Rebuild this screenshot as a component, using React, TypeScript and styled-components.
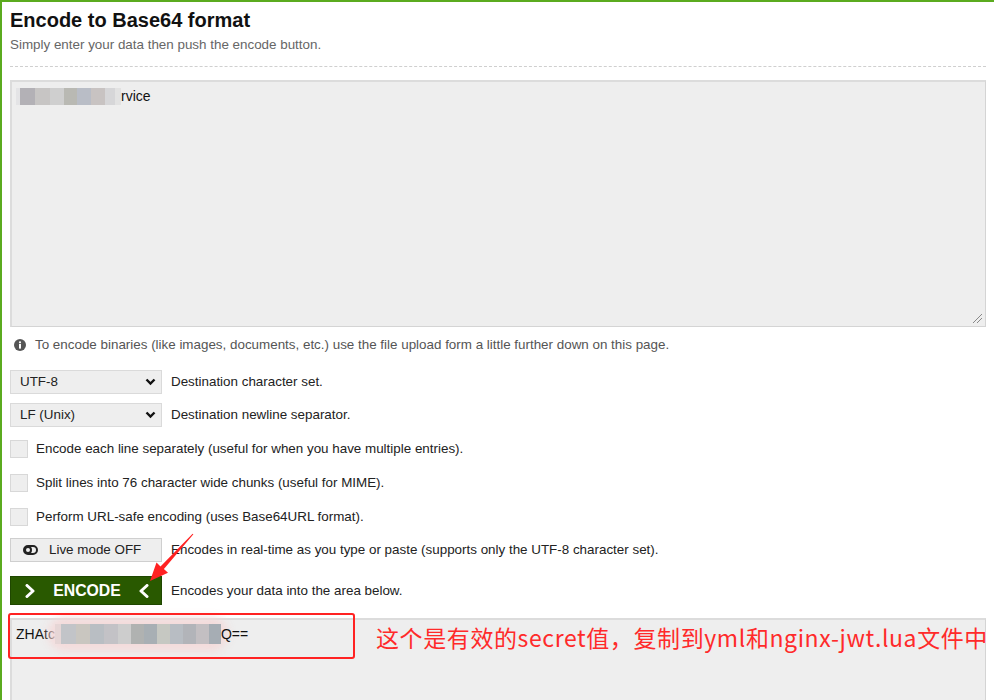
import React from "react";
import styled, { createGlobalStyle } from "styled-components";

const GlobalStyle = createGlobalStyle`
  html, body { margin: 0; padding: 0; background: #fff; }
  body { font-family: "Liberation Sans", Arial, sans-serif; color: #222; }
  * { box-sizing: border-box; }
`;

const Page = styled.div`
  position: relative;
  width: 994px;
  height: 700px;
  overflow: hidden;
  border-top: 2px solid #5bab1f;
  border-left: 2px solid #5bab1f;
  padding: 6px 8px 0 8px;
`;

const Title = styled.h1`
  margin: 0;
  font-size: 20px;
  line-height: 24px;
  font-weight: bold;
  color: #111;
`;

const Subtitle = styled.p`
  margin: 5px 0 0 0;
  font-size: 13.4px;
  line-height: 16px;
  color: #666;
`;

const Divider = styled.div`
  margin-top: 13px;
  border-top: 1px dashed #cfcfcf;
`;

const Area = styled.div<{ $h: number; $mt: number }>`
  position: relative;
  margin-top: ${(p) => p.$mt}px;
  height: ${(p) => p.$h}px;
  background: #eeeeee;
  border: 1px solid #d4d4d4;
  border-top: 2px solid #dcdcdc;
  border-left: 2px solid #dcdcdc;
  padding: 6px 4px;
  font-size: 14px;
  line-height: 17px;
  color: #111;
  display: flex;
  align-items: flex-start;
`;

const Mosaic = styled.span`
  display: inline-flex;
  height: 17px;
  align-items: stretch;
`;

const Tile = styled.span<{ $c: string; $w: number }>`
  width: ${(p) => p.$w}px;
  background: ${(p) => p.$c};
`;

const PinkMosaic = styled.span`
  display: inline-flex;
  height: 20px;
  margin-top: -2px;
  align-items: stretch;
  border-radius: 12px;
  box-shadow: 0 0 8px 7px rgba(245, 215, 215, 0.85);
  background: rgba(240, 205, 205, 0.9);
`;

const Grip = styled.svg`
  position: absolute;
  right: 2px;
  bottom: 2px;
`;

const InfoLine = styled.div`
  margin-top: 10px;
  display: flex;
  align-items: center;
  gap: 9px;
  padding-left: 4px;
  font-size: 13.4px;
  line-height: 16px;
  color: #555;
`;

const Row = styled.div<{ $mt: number }>`
  margin-top: ${(p) => p.$mt}px;
  display: flex;
  align-items: center;
  font-size: 13.4px;
  line-height: 16px;
  color: #222;
`;

const Select = styled.div`
  width: 152px;
  height: 24px;
  background: #eeeeee;
  border: 1px solid #dadada;
  display: flex;
  align-items: center;
  justify-content: space-between;
  padding: 0 5px 0 9px;
  font-size: 13.4px;
  color: #222;
  margin-right: 9px;
`;

const Check = styled.span`
  width: 18px;
  height: 18px;
  background: #eeeeee;
  border: 1px solid #d8d8d8;
  margin-right: 8px;
`;

const LiveButton = styled.div`
  width: 152px;
  height: 24px;
  background: #eeeeee;
  border: 1px solid #cfcfcf;
  display: flex;
  align-items: center;
  gap: 11px;
  padding-left: 12px;
  font-size: 13.4px;
  color: #222;
  margin-right: 9px;
`;

const EncodeButton = styled.div`
  width: 152px;
  height: 29px;
  background: #295900;
  border: 1px solid #1f4700;
  display: flex;
  align-items: center;
  justify-content: space-between;
  padding: 0 12px 0 14px;
  font-size: 15.8px;
  font-weight: bold;
  color: #fff;
  margin-right: 9px;
`;

const Annotation = styled.div`
  position: absolute;
  left: 6px;
  top: 611px;
  width: 347px;
  height: 46px;
  border: 2.5px solid #ff2222;
  border-radius: 3px;
`;

const Note = styled.div`
  position: absolute;
  left: 374px;
  top: 620px;
  font-family: "Noto Sans CJK SC", "Noto Sans", sans-serif;
  font-size: 23px;
  line-height: 30px;
  letter-spacing: 0.6px;
  color: #ff2a2a;
  white-space: nowrap;
`;

const ArrowLayer = styled.svg`
  position: absolute;
  left: 0;
  top: 0;
  pointer-events: none;
`;

const inputTiles: [string, number][] = [
  ["#e4e4e6", 4],
  ["#b3b1b6", 15],
  ["#c7c5c4", 15],
  ["#cfcfcf", 14],
  ["#b9b9b3", 13],
  ["#b9bdc6", 14],
  ["#c8c3c2", 14],
  ["#d6d6d8", 10],
  ["#e2e2e2", 6],
];

const outputTiles: [string, number][] = [
  ["#e6d6d6", 6],
  ["#c2c4c8", 15],
  ["#c9c6c0", 14],
  ["#b9bec3", 14],
  ["#c3c2c6", 14],
  ["#cdcdcd", 13],
  ["#b0b2b1", 13],
  ["#a8afb4", 13],
  ["#c6c8c2", 13],
  ["#b8bdc3", 13],
  ["#b2b4b9", 13],
  ["#c3bfc2", 13],
  ["#a6adb4", 12],
];

const Chevron = ({ dir }: { dir: "left" | "right" }) => (
  <svg width="10" height="14" viewBox="0 0 10 14">
    <polyline
      points={dir === "right" ? "2,1.5 8,7 2,12.5" : "8,1.5 2,7 8,12.5"}
      fill="none"
      stroke="#fff"
      strokeWidth="3"
      strokeLinejoin="round"
      strokeLinecap="round"
    />
  </svg>
);

const DownChevron = () => (
  <svg width="11" height="8" viewBox="0 0 11 8">
    <polyline points="1.5,1.5 5.5,5.5 9.5,1.5" fill="none" stroke="#111" strokeWidth="2.4" />
  </svg>
);

export default function App() {
  return (
    <>
      <GlobalStyle />
      <Page>
        <Title>Encode to Base64 format</Title>
        <Subtitle>Simply enter your data then push the encode button.</Subtitle>
        <Divider />
        <Area $h={247} $mt={13}>
          <Mosaic>
            {inputTiles.map(([c, w], i) => (
              <Tile key={i} $c={c} $w={w} />
            ))}
          </Mosaic>
          <span>rvice</span>
          <Grip width="12" height="12" viewBox="0 0 12 12">
            <line x1="11" y1="2" x2="2" y2="11" stroke="#888" strokeWidth="1" />
            <line x1="11" y1="6" x2="6" y2="11" stroke="#888" strokeWidth="1" />
          </Grip>
        </Area>
        <InfoLine>
          <svg width="12" height="12" viewBox="0 0 12 12">
            <circle cx="6" cy="6" r="6" fill="#555" />
            <circle cx="6" cy="3.3" r="1.1" fill="#fff" />
            <rect x="5" y="5" width="2" height="4.6" fill="#fff" />
          </svg>
          <span>
            To encode binaries (like images, documents, etc.) use the file upload form a little further down on this page.
          </span>
        </InfoLine>
        <Row $mt={17}>
          <Select>
            <span>UTF-8</span>
            <DownChevron />
          </Select>
          Destination character set.
        </Row>
        <Row $mt={9}>
          <Select>
            <span>LF (Unix)</span>
            <DownChevron />
          </Select>
          Destination newline separator.
        </Row>
        <Row $mt={13}>
          <Check />
          Encode each line separately (useful for when you have multiple entries).
        </Row>
        <Row $mt={16}>
          <Check />
          Split lines into 76 character wide chunks (useful for MIME).
        </Row>
        <Row $mt={16}>
          <Check />
          Perform URL-safe encoding (uses Base64URL format).
        </Row>
        <Row $mt={12}>
          <LiveButton>
            <svg width="15" height="10" viewBox="0 0 15 10">
              <rect x="1" y="1" width="13" height="8" rx="4" fill="none" stroke="#222" strokeWidth="2" />
              <circle cx="5" cy="5" r="4" fill="#222" />
              <circle cx="5" cy="5" r="2" fill="#eee" />
            </svg>
            <span>Live mode OFF</span>
          </LiveButton>
          Encodes in real-time as you type or paste (supports only the UTF-8 character set).
        </Row>
        <Row $mt={14}>
          <EncodeButton>
            <Chevron dir="right" />
            <span>ENCODE</span>
            <Chevron dir="left" />
          </EncodeButton>
          Encodes your data into the area below.
        </Row>
        <Area $h={120} $mt={13}>
          <span>ZHAtc</span>
          <PinkMosaic>
            {outputTiles.map(([c, w], i) => (
              <Tile key={i} $c={c} $w={w} />
            ))}
          </PinkMosaic>
          <span>Q==</span>
        </Area>
        <Annotation />
        <Note>这个是有效的secret值，复制到yml和nginx-jwt.lua文件中</Note>
        <ArrowLayer width="994" height="700" viewBox="0 0 994 700">
          <polygon
            points="190.6,531.7 158.5,564.5 154.5,560.5 148,579 166,570.8 161.9,566.9 191.4,532.3"
            fill="#ff2222"
          />
        </ArrowLayer>
      </Page>
    </>
  );
}
